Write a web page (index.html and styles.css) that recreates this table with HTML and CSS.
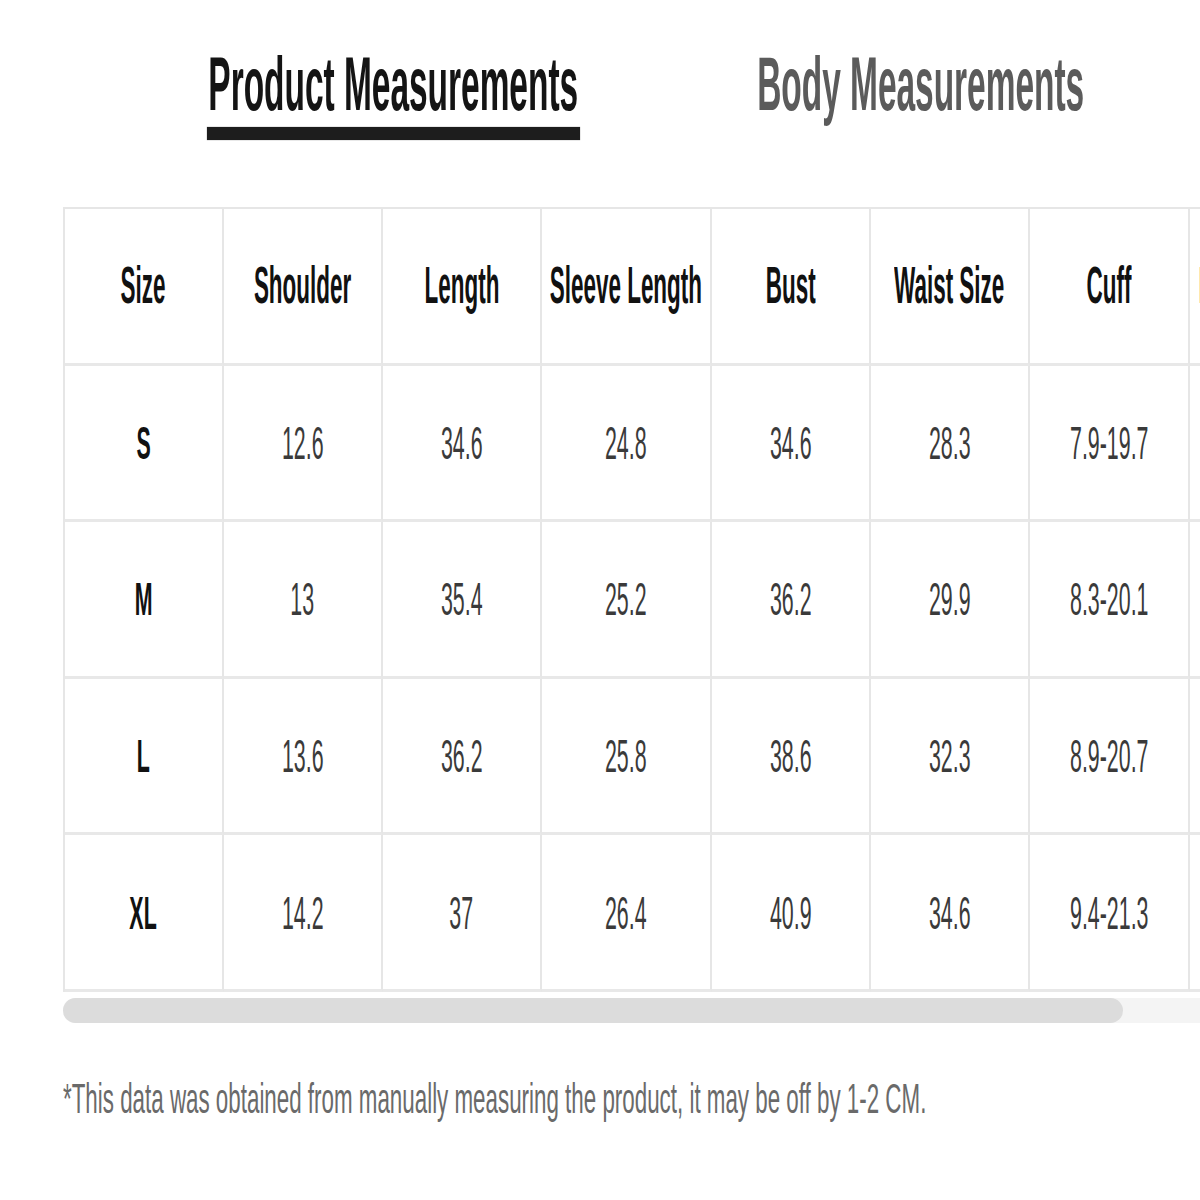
FILE: index.html
```html
<!DOCTYPE html>
<html lang="en">
<head>
<meta charset="utf-8">
<title>Size Chart</title>
<link rel="stylesheet" href="styles.css">
</head>
<body>
<div class="page">
  <div class="tabs">
    <div class="tab tab-active"><span class="sq tab-label">Product Measurements</span><div class="tab-bar"></div></div>
    <div class="tab tab-body"><span class="sq tab-label">Body Measurements</span></div>
  </div>

  <div class="table-wrap">
    <div class="grid">
      <div class="cell head"><span class="sq">Size</span></div>
      <div class="cell head"><span class="sq">Shoulder</span></div>
      <div class="cell head"><span class="sq">Length</span></div>
      <div class="cell head"><span class="sq">Sleeve Length</span></div>
      <div class="cell head"><span class="sq">Bust</span></div>
      <div class="cell head"><span class="sq">Waist Size</span></div>
      <div class="cell head"><span class="sq">Cuff</span></div>
      <div class="cell head"><span class="sq">Bottom Width</span></div>

      <div class="cell size"><span class="sq">S</span></div>
      <div class="cell"><span class="sq">12.6</span></div>
      <div class="cell"><span class="sq">34.6</span></div>
      <div class="cell"><span class="sq">24.8</span></div>
      <div class="cell"><span class="sq">34.6</span></div>
      <div class="cell"><span class="sq">28.3</span></div>
      <div class="cell"><span class="sq">7.9-19.7</span></div>
      <div class="cell"><span class="sq">36.2</span></div>

      <div class="cell size"><span class="sq">M</span></div>
      <div class="cell"><span class="sq">13</span></div>
      <div class="cell"><span class="sq">35.4</span></div>
      <div class="cell"><span class="sq">25.2</span></div>
      <div class="cell"><span class="sq">36.2</span></div>
      <div class="cell"><span class="sq">29.9</span></div>
      <div class="cell"><span class="sq">8.3-20.1</span></div>
      <div class="cell"><span class="sq">37.8</span></div>

      <div class="cell size"><span class="sq">L</span></div>
      <div class="cell"><span class="sq">13.6</span></div>
      <div class="cell"><span class="sq">36.2</span></div>
      <div class="cell"><span class="sq">25.8</span></div>
      <div class="cell"><span class="sq">38.6</span></div>
      <div class="cell"><span class="sq">32.3</span></div>
      <div class="cell"><span class="sq">8.9-20.7</span></div>
      <div class="cell"><span class="sq">40.2</span></div>

      <div class="cell size"><span class="sq">XL</span></div>
      <div class="cell"><span class="sq">14.2</span></div>
      <div class="cell"><span class="sq">37</span></div>
      <div class="cell"><span class="sq">26.4</span></div>
      <div class="cell"><span class="sq">40.9</span></div>
      <div class="cell"><span class="sq">34.6</span></div>
      <div class="cell"><span class="sq">9.4-21.3</span></div>
      <div class="cell"><span class="sq">42.5</span></div>
    </div>
  </div>

  <div class="scrollbar"><div class="thumb"></div></div>

  <p class="note"><span class="sq note-text">*This data was obtained from manually measuring the product, it may be off by 1-2 CM.</span></p>
</div>
</body>
</html>
```

FILE: styles.css
```css
html, body {
  margin: 0;
  padding: 0;
  background: #ffffff;
  overflow: hidden;
}

body {
  font-family: "Liberation Sans", Arial, sans-serif;
}

.page {
  width: 1200px;
  height: 1200px;
  overflow: hidden;
}

.sq {
  display: inline-block;
  white-space: nowrap;
  transform: scaleX(0.44);
  transform-origin: center center;
}

/* Tabs */
.tabs {
  display: flex;
  padding: 46px 0 0 207px;
  gap: 178px;
  height: 94px;
}

.tab {
  flex: 0 0 auto;
  min-width: 0;
  display: flex;
  flex-direction: column;
  align-items: center;
}

.tab-active {
  width: 373px;
}

.tab-body {
  width: 326px;
}

.tab-label {
  font-size: 76px;
  line-height: 76px;
  font-weight: 700;
  color: #141414;
}

.tab-body .tab-label {
  color: #5b5b5b;
}

.tab-bar {
  margin-top: 5px;
  width: 100%;
  height: 13px;
  background: #1d1d1d;
  box-shadow: 0 0 1px #777;
}

/* Table */
.table-wrap {
  margin: 67px 0 0 63px;
  width: 1137px;
  overflow: hidden;
}

.grid {
  display: grid;
  width: 1293px;
  grid-template-columns: 159px 159px 159px 170px 159px 159px 160px 166px;
  grid-auto-rows: 156.6px;
  border-top: 2px solid #e6e6e6;
  border-left: 2px solid #e6e6e6;
  box-sizing: border-box;
}

.cell {
  display: flex;
  align-items: center;
  justify-content: center;
  min-width: 0;
  border-right: 2px solid #e6e6e6;
  border-bottom: 3px solid #e8e8e8;
  font-size: 47px;
  line-height: 1;
  color: #3a3a3a;
}

.cell .sq {
  transform: scaleX(0.455);
}

.cell.head {
  font-size: 51px;
  font-weight: 700;
  color: #111111;
}

.cell.head .sq {
  transform: scaleX(0.44);
}

.cell.size {
  font-weight: 700;
  color: #111111;
}

/* Scrollbar */
.scrollbar {
  margin: 6px 0 0 63px;
  width: 1137px;
  height: 25px;
  background: #f4f4f4;
  border-radius: 12px 0 0 12px;
}

.thumb {
  width: 1060px;
  height: 25px;
  border-radius: 12.5px;
  background: #dcdcdc;
}

/* Note */
.note {
  margin: 54px 0 0 63px;
  font-size: 43px;
  line-height: 43px;
  color: #6a6a6a;
}

.note-text {
  transform-origin: left center;
  transform: scaleX(0.52);
}
```
